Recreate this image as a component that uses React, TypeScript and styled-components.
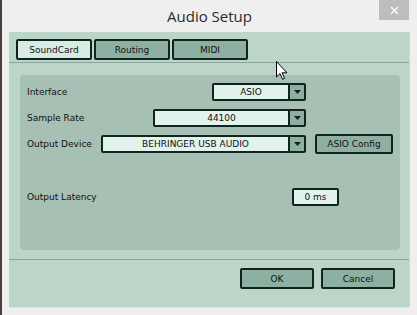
import React from "react"
import styled, { createGlobalStyle } from "styled-components"

const GlobalStyle = createGlobalStyle`
  html, body {
    margin: 0;
    padding: 0;
  }
  body {
    background: #4a3f36;
    font-family: "DejaVu Sans", "Liberation Sans", sans-serif;
  }
`

const ink = "#10241d"

const Window = styled.div`
  position: relative;
  margin-left: 2px;
  width: 415px;
  height: 315px;
  background: #efefef;
  display: flex;
  flex-direction: column;
  overflow: hidden;
`

const TitleBar = styled.div`
  position: relative;
  height: 32px;
  display: flex;
  align-items: center;
  justify-content: center;
  font-family: "Open Sans", "Noto Sans", sans-serif;
  font-size: 15px;
  color: #2b2b2b;
`

const CloseButton = styled.div`
  position: absolute;
  top: 0;
  right: 8px;
  width: 30px;
  height: 20px;
  background: #bdbdbd;
  display: flex;
  align-items: center;
  justify-content: center;
`

const Body = styled.div`
  flex: 1;
  margin: 0 8px 8px 7px;
  background: #bbd6c9;
  box-shadow: 1px 0 0 #cdd6d2, 0 1px 0 #dfe4e2;
  display: flex;
  flex-direction: column;
  font-size: 9px;
  color: #111;
`

const TabBar = styled.div`
  display: flex;
  gap: 2px;
  padding: 7px 0 2px 7px;
  border-bottom: 1px solid #88a79a;
`

const Tab = styled.div<{ $active?: boolean }>`
  box-sizing: border-box;
  width: 76px;
  height: 21px;
  border: 2px solid ${ink};
  border-radius: 2px;
  background: ${p => (p.$active ? "#d7ece4" : "#8eb0a2")};
  display: flex;
  align-items: center;
  justify-content: center;
`

const Content = styled.div`
  flex: 1;
  display: flex;
  flex-direction: column;
  padding: 12px 9px 9px 11px;
`

const Panel = styled.div`
  flex: 1;
  background: #a6c0b4;
  border-radius: 4px;
  padding: 4px 7px 0 7px;
  display: flex;
  flex-direction: column;
`

const Row = styled.div<{ $gapTop?: number }>`
  display: flex;
  align-items: center;
  height: 26px;
  margin-top: ${p => p.$gapTop ?? 0}px;
`

const Label = styled.div`
  flex: 1;
  white-space: nowrap;
`

const Select = styled.div<{ $width: number }>`
  box-sizing: border-box;
  width: ${p => p.$width}px;
  height: 18px;
  border: 2px solid ${ink};
  border-radius: 2px;
  display: flex;
  overflow: hidden;
`

const SelectValue = styled.div`
  flex: 1;
  background: #e2f2ec;
  display: flex;
  align-items: center;
  justify-content: center;
  white-space: nowrap;
`

const SelectArrow = styled.div`
  width: 14px;
  border-left: 2px solid ${ink};
  background: #8eb0a2;
  display: flex;
  align-items: center;
  justify-content: center;
`

const Side = styled.div`
  width: 78px;
  margin-left: 9px;
  display: flex;
`

const Button = styled.div<{ $width: number; $height?: number }>`
  box-sizing: border-box;
  width: ${p => p.$width}px;
  height: ${p => p.$height ?? 21}px;
  border: 2px solid ${ink};
  border-radius: 2px;
  background: #8eb0a2;
  display: flex;
  align-items: center;
  justify-content: center;
  white-space: nowrap;
`

const Field = styled.div`
  box-sizing: border-box;
  width: 47px;
  height: 18px;
  margin-right: 54px;
  border: 2px solid ${ink};
  border-radius: 2px;
  background: #e2f2ec;
  display: flex;
  align-items: center;
  justify-content: center;
`

const Footer = styled.div`
  height: 39px;
  border-top: 1px solid #88a79a;
  display: flex;
  justify-content: flex-end;
  align-items: flex-start;
  gap: 7px;
  padding: 8px 14px 0 0;
  box-sizing: content-box;
`

const Cursor = styled.svg`
  position: absolute;
  left: 274px;
  top: 61px;
`

const Arrow = () => (
  <svg width="7" height="4" viewBox="0 0 7 4">
    <path d="M0 0 H7 L3.5 4 Z" fill={ink} />
  </svg>
)

const Dropdown: React.FC<{ width: number; value: string }> = ({ width, value }) => (
  <Select $width={width}>
    <SelectValue>{value}</SelectValue>
    <SelectArrow>
      <Arrow />
    </SelectArrow>
  </Select>
)

const App: React.FC = () => {
  return (
    <Window>
      <GlobalStyle />
      <TitleBar>
        Audio Setup
        <CloseButton>
          <svg width="9" height="9" viewBox="0 0 9 9">
            <path d="M1 1 L8 8 M8 1 L1 8" stroke="#fff" strokeWidth="1.4" />
          </svg>
        </CloseButton>
      </TitleBar>

      <Body>
        <TabBar>
          <Tab $active>SoundCard</Tab>
          <Tab>Routing</Tab>
          <Tab>MIDI</Tab>
        </TabBar>

        <Content>
          <Panel>
            <Row>
              <Label>Interface</Label>
              <Dropdown width={94} value="ASIO" />
              <Side />
            </Row>
            <Row>
              <Label>Sample Rate</Label>
              <Dropdown width={153} value="44100" />
              <Side />
            </Row>
            <Row>
              <Label>Output Device</Label>
              <Dropdown width={205} value="BEHRINGER USB AUDIO" />
              <Side>
                <Button $width={78} $height={20}>ASIO Config</Button>
              </Side>
            </Row>
            <Row $gapTop={27}>
              <Label>Output Latency</Label>
              <Field>0 ms</Field>
            </Row>
          </Panel>
        </Content>

        <Footer>
          <Button $width={74}>OK</Button>
          <Button $width={74}>Cancel</Button>
        </Footer>
      </Body>

      <Cursor width="12" height="19" viewBox="0 0 12 19">
        <path
          d="M0.5 0.5 L0.5 16 L4 12.6 L6.6 18.3 L8.6 17.4 L6.1 11.8 L11 11.8 Z"
          fill="#fff"
          stroke="#000"
          strokeWidth="1"
          strokeLinejoin="miter"
        />
      </Cursor>
    </Window>
  )
}

export default App
